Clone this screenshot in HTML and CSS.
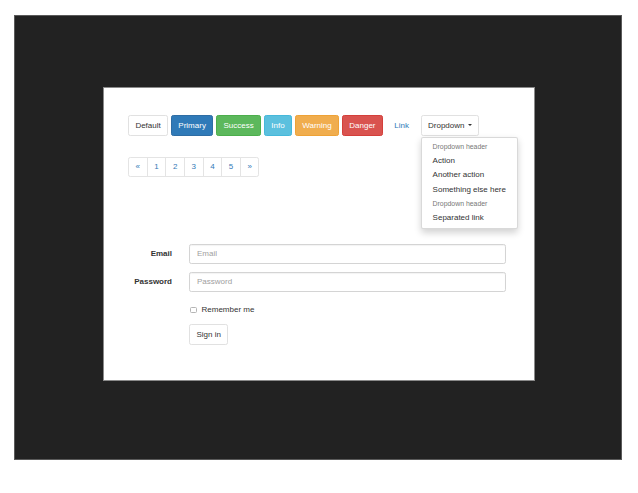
FILE: index.html
```html
<!DOCTYPE html>
<html>
<head>
<meta charset="utf-8">
<link rel="stylesheet" href="styles.css">
</head>
<body>
<div class="frame">
  <div class="card">
    <div class="btn-row">
      <button class="btn btn-default">Default</button>
      <button class="btn btn-primary">Primary</button>
      <button class="btn btn-success">Success</button>
      <button class="btn btn-info">Info</button>
      <button class="btn btn-warning">Warning</button>
      <button class="btn btn-danger">Danger</button>
      <button class="btn btn-link">Link</button>
      <div class="dropdown">
        <button class="btn btn-default">Dropdown <span class="caret"></span></button>
        <ul class="dropdown-menu">
          <li class="dropdown-header">Dropdown header</li>
          <li><a href="#">Action</a></li>
          <li><a href="#">Another action</a></li>
          <li><a href="#">Something else here</a></li>
          <li class="dropdown-header">Dropdown header</li>
          <li><a href="#">Separated link</a></li>
        </ul>
      </div>
    </div>
    <ul class="pagination">
      <li><a href="#">&laquo;</a></li>
      <li><a href="#">1</a></li>
      <li><a href="#">2</a></li>
      <li><a href="#">3</a></li>
      <li><a href="#">4</a></li>
      <li><a href="#">5</a></li>
      <li><a href="#">&raquo;</a></li>
    </ul>
    <form class="form-horizontal">
      <label class="control-label">Email</label>
      <input class="form-control" type="email" placeholder="Email">
      <label class="control-label">Password</label>
      <input class="form-control" type="password" placeholder="Password">
      <div></div>
      <label class="checkbox"><input type="checkbox"> Remember me</label>
      <div></div>
      <div><button type="button" class="btn btn-default">Sign in</button></div>
    </form>
  </div>
</div>
</body>
</html>
```

FILE: styles.css
```css
* { box-sizing: border-box; }
html, body { margin: 0; padding: 0; background: #fff; }
body {
  padding: 15px 16px 0 14px;
  font-family: "Liberation Sans", Arial, Helvetica, sans-serif;
  font-size: 8px;
  color: #333;
}
.frame {
  width: 608px;
  height: 445px;
  background: #222;
  border: 1px solid #5a5a5a;
  padding-top: 71px;
}
.card {
  width: 432px;
  height: 294px;
  margin-left: 88px;
  background: #fff;
  border: 1px solid #8a8a8a;
  padding: 27px 24px 0 24px;
}
.btn-row {
  display: flex;
  gap: 2.8px;
  align-items: flex-start;
}
.btn {
  display: inline-block;
  font-family: inherit;
  font-size: 8px;
  line-height: 11.5px;
  padding: 3.5px 6.4px;
  border: 1px solid transparent;
  border-radius: 2.3px;
  background: #fff;
  color: #333;
  white-space: nowrap;
  cursor: pointer;
  margin: 0;
}
.btn-default { background: #fff; border-color: #e1e1e1; color: #333; }
.btn-primary { background: #2f7ab8; border-color: #2e6da4; color: #fff; }
.btn-success { background: #5cb85c; border-color: #4cae4c; color: #fff; }
.btn-info { background: #5bc0de; border-color: #46b8da; color: #fff; }
.btn-warning { background: #f0ad4e; border-color: #eea236; color: #fff; }
.btn-danger { background: #d9534f; border-color: #d43f3a; color: #fff; }
.btn-link { background: transparent; color: #2f7ab8; border-color: transparent; padding-left: 7.5px; }
.dropdown { position: relative; margin-left: 1.5px; }
.caret {
  display: inline-block;
  width: 0; height: 0;
  margin-left: 1px;
  vertical-align: middle;
  border-top: 2.3px solid #333;
  border-left: 2.3px solid transparent;
  border-right: 2.3px solid transparent;
}
.dropdown-menu {
  position: absolute;
  top: 100%;
  left: 0;
  margin: 1.5px 0 0;
  padding: 2px 0 2.9px;
  list-style: none;
  min-width: 97px;
  background: #fff;
  border: 1px solid rgba(0,0,0,.15);
  border-radius: 2.3px;
  box-shadow: 0 3.4px 7px rgba(0,0,0,.175);
  z-index: 10;
}
.dropdown-menu li a {
  display: block;
  padding: 1.7px 11px;
  line-height: 11.3px;
  color: #333;
  text-decoration: none;
  white-space: nowrap;
}
.dropdown-header {
  display: block;
  padding: 1.7px 11px;
  font-size: 6.9px;
  line-height: 9.6px;
  color: #777;
  white-space: nowrap;
}
.pagination {
  display: flex;
  list-style: none;
  margin: 21px 0 0;
  padding: 0;
}
.pagination li a {
  display: block;
  padding: 3.5px 6.6px;
  line-height: 11.5px;
  text-align: center;
  border: 1px solid #e4e4e4;
  margin-left: -1px;
  color: #337ab7;
  text-decoration: none;
  background: #fff;
}
.pagination li:first-child a { margin-left: 0; border-radius: 2.3px 0 0 2.3px; }
.pagination li:last-child a { border-radius: 0 2.3px 2.3px 0; }
.form-horizontal {
  display: grid;
  grid-template-columns: 44px 317px;
  column-gap: 17px;
  row-gap: 8.6px;
  margin-top: 67px;
  align-items: center;
}
.control-label {
  text-align: right;
  font-weight: bold;
  color: #333;
  white-space: nowrap;
}
.form-control {
  display: block;
  width: 100%;
  height: 19.5px;
  padding: 3.4px 7px;
  font-family: inherit;
  font-size: 8px;
  line-height: 11.5px;
  color: #555;
  background: #fff;
  border: 1px solid #d4d4d4;
  border-radius: 2.3px;
  box-shadow: inset 0 1px 1px rgba(0,0,0,.05);
  outline: none;
}
.form-control::placeholder { color: #a0a0a0; }
.checkbox {
  display: flex;
  align-items: center;
  gap: 5px;
  padding-top: 4px;
  line-height: 11.5px;
  color: #333;
}
.checkbox input {
  appearance: none;
  -webkit-appearance: none;
  margin: 0 0 0 1px;
  width: 6.5px;
  height: 6.5px;
  border: 1px solid #b5b5b5;
  border-radius: 1.5px;
  background: #fff;
}
```
